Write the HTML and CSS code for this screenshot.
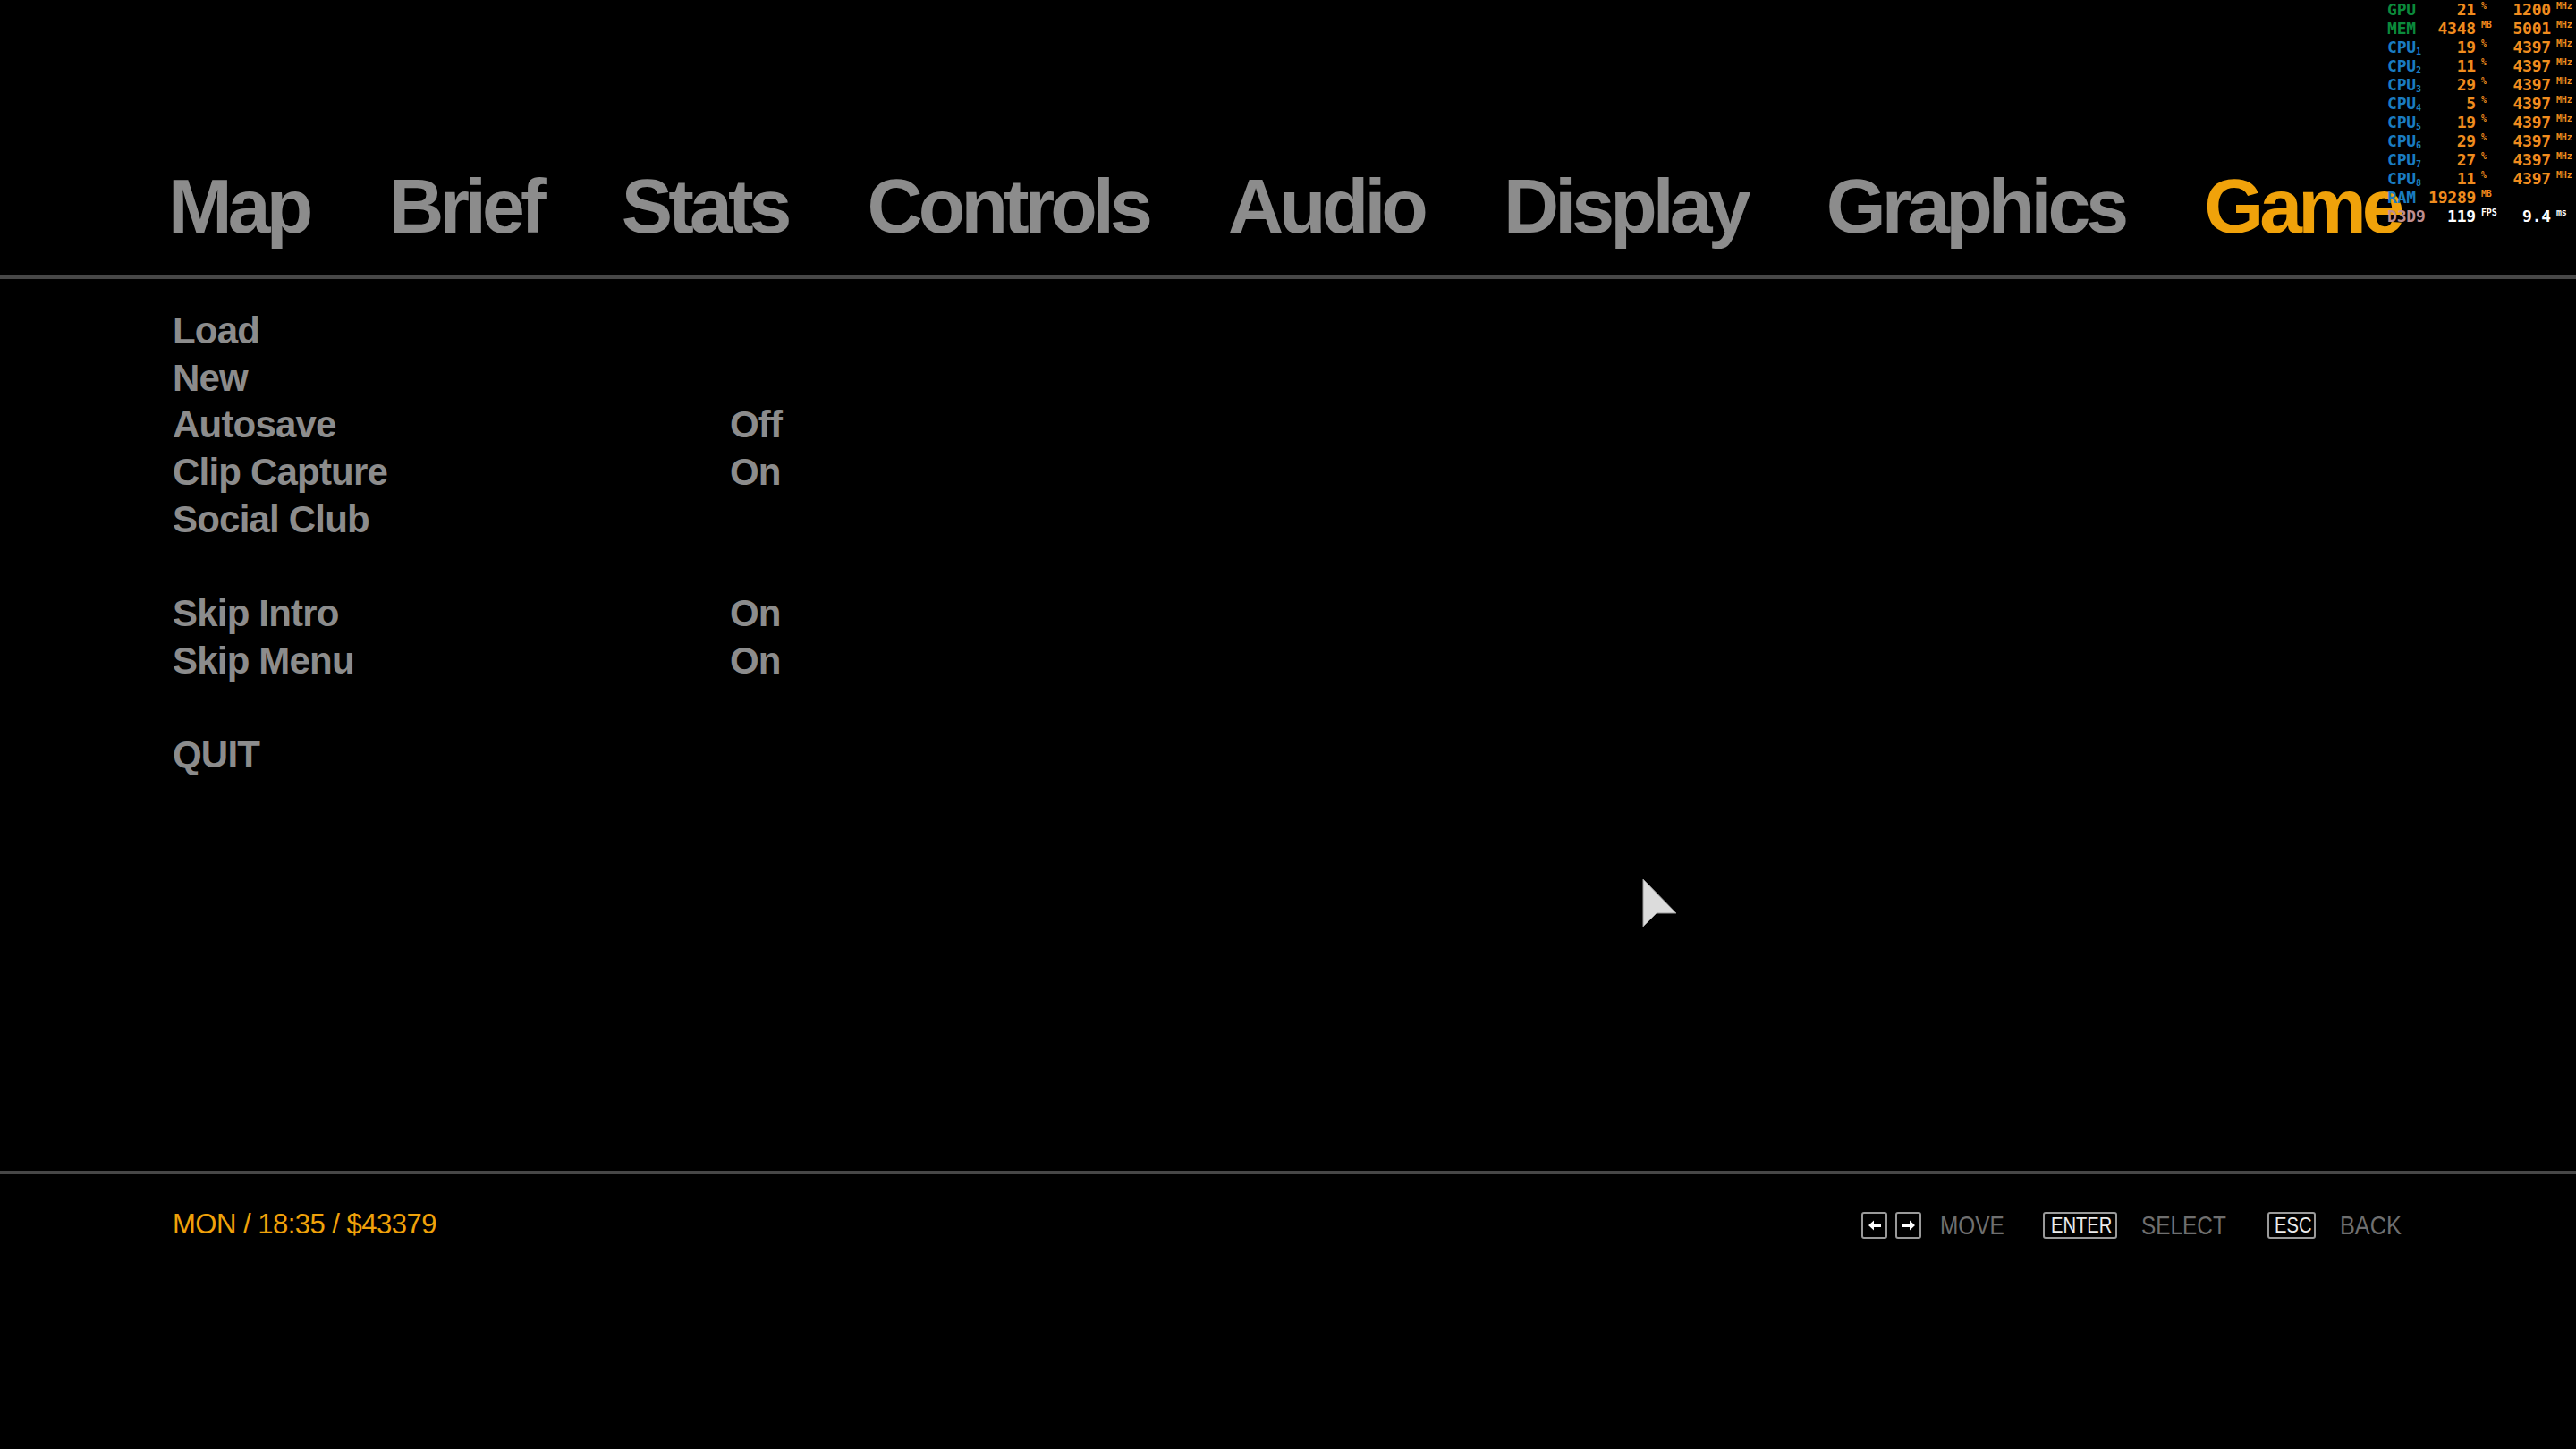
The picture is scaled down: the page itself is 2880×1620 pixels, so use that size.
FILE: index.html
```html
<!DOCTYPE html>
<html>
<head>
<meta charset="utf-8">
<link rel="stylesheet" href="styles.css">
</head>
<body>
<div class="screen">
  <header class="tabs">
    <nav class="tab-row">
      <span class="tab">Map</span>
      <span class="tab">Brief</span>
      <span class="tab">Stats</span>
      <span class="tab">Controls</span>
      <span class="tab">Audio</span>
      <span class="tab">Display</span>
      <span class="tab">Graphics</span>
      <span class="tab active">Game</span>
    </nav>
  </header>

  <main class="menu">
    <div class="row"><span class="label">Load</span></div>
    <div class="row"><span class="label">New</span></div>
    <div class="row"><span class="label">Autosave</span><span class="value">Off</span></div>
    <div class="row"><span class="label">Clip Capture</span><span class="value">On</span></div>
    <div class="row"><span class="label">Social Club</span></div>
    <div class="row"></div>
    <div class="row"><span class="label">Skip Intro</span><span class="value">On</span></div>
    <div class="row"><span class="label">Skip Menu</span><span class="value">On</span></div>
    <div class="row"></div>
    <div class="row"><span class="label">QUIT</span></div>
  </main>

  <footer class="footer">
    <div class="status">MON / 18:35 / $43379</div>
    <div class="hints">
      <span class="key arrow"><svg width="16" height="14" viewBox="0 0 16 14"><path d="M1 7 L7 1.5 L7 5 L15 5 L15 9 L7 9 L7 12.5 Z" fill="#fff"/></svg></span>
      <span class="key arrow"><svg width="16" height="14" viewBox="0 0 16 14"><path d="M15 7 L9 1.5 L9 5 L1 5 L1 9 L9 9 L9 12.5 Z" fill="#fff"/></svg></span>
      <span class="hint-label move"><span class="sx">MOVE</span></span>
      <span class="key text enter"><span class="sx">ENTER</span></span>
      <span class="hint-label select"><span class="sx">SELECT</span></span>
      <span class="key text esc"><span class="sx">ESC</span></span>
      <span class="hint-label back"><span class="sx">BACK</span></span>
    </div>
  </footer>

  <div class="osd">
    <span class="l gpu">GPU</span><span class="v">21</span><span class="u">%</span><span class="v">1200</span><span class="u">MHz</span>
    <span class="l gpu">MEM</span><span class="v">4348</span><span class="u">MB</span><span class="v">5001</span><span class="u">MHz</span>
    <span class="l cpu">CPU<sub>1</sub></span><span class="v">19</span><span class="u">%</span><span class="v">4397</span><span class="u">MHz</span>
    <span class="l cpu">CPU<sub>2</sub></span><span class="v">11</span><span class="u">%</span><span class="v">4397</span><span class="u">MHz</span>
    <span class="l cpu">CPU<sub>3</sub></span><span class="v">29</span><span class="u">%</span><span class="v">4397</span><span class="u">MHz</span>
    <span class="l cpu">CPU<sub>4</sub></span><span class="v">5</span><span class="u">%</span><span class="v">4397</span><span class="u">MHz</span>
    <span class="l cpu">CPU<sub>5</sub></span><span class="v">19</span><span class="u">%</span><span class="v">4397</span><span class="u">MHz</span>
    <span class="l cpu">CPU<sub>6</sub></span><span class="v">29</span><span class="u">%</span><span class="v">4397</span><span class="u">MHz</span>
    <span class="l cpu">CPU<sub>7</sub></span><span class="v">27</span><span class="u">%</span><span class="v">4397</span><span class="u">MHz</span>
    <span class="l cpu">CPU<sub>8</sub></span><span class="v">11</span><span class="u">%</span><span class="v">4397</span><span class="u">MHz</span>
    <span class="l cpu">RAM</span><span class="v">19289</span><span class="u">MB</span><span class="v"></span><span class="u"></span>
    <span class="l d3d">D3D9</span><span class="v w">119</span><span class="u w">FPS</span><span class="v w">9.4</span><span class="u w">ms</span>
  </div>

  <svg class="cursor" width="40" height="56" viewBox="0 0 40 56">
    <path d="M1 1 L38 39 L16 39 L1 54 Z" fill="#dcdcdc" stroke="#9a9a9a" stroke-width="1"/>
  </svg>
</div>
</body>
</html>
```

FILE: styles.css
```css
html, body {
  margin: 0;
  padding: 0;
  background: #000;
}

.screen {
  position: relative;
  width: 2880px;
  height: 1620px;
  display: flex;
  flex-direction: column;
  overflow: hidden;
  background: #000;
}

/* ---------- tabs ---------- */
.tabs {
  padding: 187px 0 34px 188px;
  border-bottom: 4px solid #474747;
}

.tab-row {
  display: flex;
  gap: 89px;
}

.tab {
  font-family: "Liberation Sans", Arial, sans-serif;
  font-weight: 700;
  font-size: 86px;
  line-height: 87px;
  letter-spacing: -4.9px;
  color: #8c8c8c;
  white-space: nowrap;
}

.tab.active {
  color: #f0a20a;
}

/* ---------- menu ---------- */
.menu {
  flex: 1;
  padding: 32px 0 0 193px;
}

.row {
  display: flex;
  height: 52.7px;
  font-family: "Liberation Sans", Arial, sans-serif;
  font-weight: 700;
  font-size: 42px;
  line-height: 52.7px;
  letter-spacing: -0.8px;
  color: #8c8c8c;
}

.label {
  width: 623px;
}

/* ---------- footer ---------- */
.footer {
  box-sizing: border-box;
  height: 311px;
  border-top: 4px solid #474747;
  display: flex;
  justify-content: space-between;
  align-items: flex-start;
  padding: 36px 195px 0 193px;
}

.status {
  font-family: "Liberation Sans", Arial, sans-serif;
  font-size: 31px;
  line-height: 40px;
  letter-spacing: -0.5px;
  color: #f0a20a;
}

.hints {
  display: flex;
  align-items: center;
  height: 40px;
  margin-top: 1px;
  font-family: "Liberation Sans", Arial, sans-serif;
}

.sx {
  display: inline-block;
  transform: scaleX(0.84);
  transform-origin: 0 50%;
  white-space: nowrap;
}

.key {
  box-sizing: border-box;
  display: flex;
  align-items: center;
  height: 30px;
  border: 2px solid #9a9a9a;
  border-radius: 3px;
  color: #ececec;
}

.key.arrow {
  width: 29px;
  justify-content: center;
  margin-right: 9px;
}

.key.text {
  font-size: 24px;
  line-height: 26px;
  padding-left: 7px;
  margin-right: 27px;
}

.key.enter { width: 83px; }
.key.esc   { width: 54px; padding-left: 6px; }

.hint-label {
  display: block;
  font-size: 29px;
  line-height: 30px;
  color: #6f6f6f;
  margin-right: 45px;
}

.hint-label.move   { width: 70px; margin-left: 12px; }
.hint-label.select { width: 96px; }
.hint-label.back   { width: 69px; margin-right: 0; }
.hint-label.back .sx { transform: scaleX(0.87); }

/* ---------- OSD overlay ---------- */
.osd {
  position: absolute;
  top: 0;
  left: 2669px;
  display: grid;
  grid-template-columns: 46px 53px 22px 62px 22px;
  grid-auto-rows: 21px;
  font-family: "DejaVu Sans Mono", monospace;
  font-weight: 700;
  font-size: 18px;
  line-height: 21px;
  letter-spacing: -0.2px;
  color: #f08c1e;
}

.osd .l {
  white-space: nowrap;
}

.osd .l sub {
  font-size: 10px;
  vertical-align: -2px;
}

.osd .gpu { color: #0b8a3c; }
.osd .cpu { color: #1a7cc2; }
.osd .d3d { color: #bf8e8e; }

.osd .v {
  text-align: right;
}

.osd .u {
  font-size: 10px;
  line-height: 13px;
  padding-left: 6px;
  white-space: nowrap;
}

.osd .w { color: #fff; }

/* ---------- cursor ---------- */
.cursor {
  position: absolute;
  left: 1836px;
  top: 982px;
}
```
